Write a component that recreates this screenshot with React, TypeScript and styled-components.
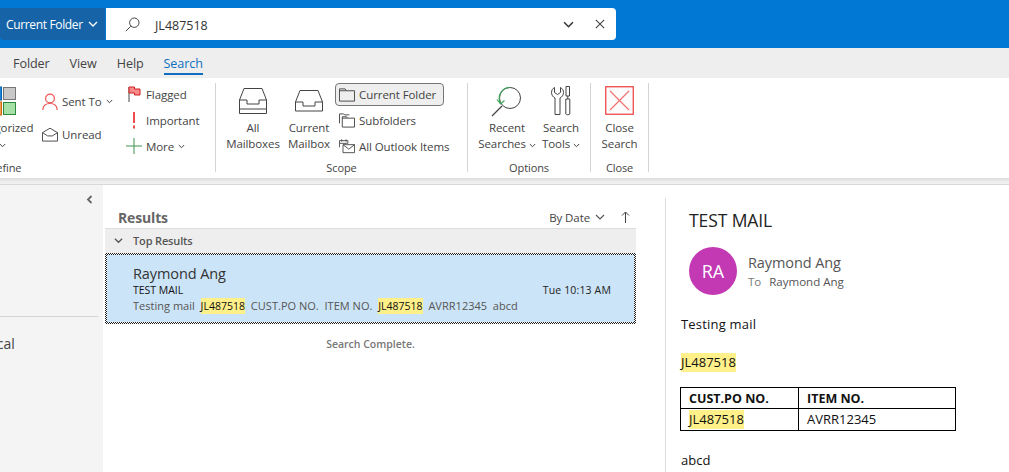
import React from "react";
import styled, { createGlobalStyle } from "styled-components";

const Global = createGlobalStyle`
  html, body { margin: 0; padding: 0; background: #fff; }
  body { font-family: "Open Sans", "Noto Sans", "Liberation Sans", sans-serif; font-size: 12px; color: #444; }
`;
const Page = styled.div`width: 1009px; height: 472px; overflow: hidden; display: flex; flex-direction: column;`;
const TopBar = styled.div`height: 48px; box-sizing: border-box; padding: 8px 0; background: #0078d4; display: flex; flex: none;`;
const ScopeButton = styled.div`width: 105px; background: #1664a7; border-radius: 0 0 0 4px; color: #fff; font-size: 12px; letter-spacing: -0.35px; display: flex; align-items: center; gap: 5px; padding-left: 6px; box-sizing: border-box; margin-right: 1px; white-space: nowrap;`;
const SearchBox = styled.div`width: 510px; background: #fff; border-radius: 0 4px 4px 0; display: flex; align-items: center; box-sizing: border-box; padding-left: 19px; color: #333; font-size: 12.5px;`;
const SearchText = styled.span`margin-left: 15px; flex: 1; padding-top: 2px;`;
const BoxAction = styled.span`display: flex; align-items: center; justify-content: center; width: 32px; height: 32px;`;
const Tabs = styled.div`height: 30px; background: #eee; display: flex; flex: none; gap: 20px; padding-left: 13px; box-sizing: border-box;`;
const Tab = styled.div<{ $on?: boolean }>`font-size: 12.6px; letter-spacing: -0.1px; height: 25px; line-height: 31px; color: ${p => (p.$on ? "#106ebe" : "#444")}; border-bottom: 2px solid ${p => (p.$on ? "#106ebe" : "transparent")};`;
const Ribbon = styled.div`height: 100px; box-sizing: border-box; background: #fff; display: flex; flex: none; padding: 5px 0 6px; overflow: hidden;`;
const Group = styled.div<{ $w: number; $shift?: number }>`width: ${p => p.$w}px; margin-left: ${p => p.$shift ?? 0}px; flex: none; box-sizing: border-box; border-right: 1px solid #d4d4d4; display: flex; flex-direction: column; align-items: stretch;`;
const GroupBody = styled.div<{ $end?: boolean; $pad?: number }>`height: 77px; flex: none; display: flex; justify-content: ${p => (p.$end ? "flex-end" : "flex-start")}; padding-left: ${p => p.$pad ?? 0}px;`;
const GroupLabel = styled.div`text-align: center; font-size: 11px; height: 12px; flex: none; line-height: 16px; letter-spacing: -0.1px; color: #444;`;
const Big = styled.div<{ $w: number }>`width: ${p => p.$w}px; flex: none; display: flex; flex-direction: column; align-items: center; text-align: center; font-size: 11.5px; line-height: 16px; letter-spacing: -0.1px; white-space: nowrap;`;
const BigIcon = styled.div`height: 37px; box-sizing: border-box; padding-bottom: 2px; display: flex; align-items: center; justify-content: center;`;
const Stack = styled.div<{ $w: number; $pitch: number; $pad?: number; $top?: number }>`width: ${p => p.$w}px; flex: none; display: flex; flex-direction: column; box-sizing: border-box; padding-left: ${p => p.$pad ?? 0}px; padding-top: ${p => p.$top ?? 0}px; & > * { height: ${p => p.$pitch}px; }`;
const Small = styled.div<{ $indent?: number }>`display: flex; align-items: center; gap: 4px; white-space: nowrap; font-size: 11.5px; letter-spacing: -0.08px; box-sizing: border-box; padding-left: ${p => p.$indent ?? 0}px;`;
const ActiveSmall = styled(Small)`&& { height: 23px; } width: 109px; margin-bottom: 1px; background: #eee; border: 1px solid #777; border-radius: 4px;`;
const FlagStack = styled(Stack)`margin-top: -2px;`;
const IconSlot = styled.span`width: 16px; display: flex; justify-content: center; flex: none;`;
const Shadow = styled.div`height: 7px; flex: none; background: linear-gradient(#dcdcdc, #f0f0f0 70%); border-bottom: 1px solid #d8d8d8; box-sizing: border-box;`;
const Main = styled.div`flex: 1; display: flex; min-height: 0;`;
const Nav = styled.div`width: 103px; flex: none; background: #f4f4f4; display: flex; flex-direction: column; box-sizing: border-box; overflow: hidden;`;
const Collapse = styled.div`height: 132px; flex: none; box-sizing: border-box; display: flex; justify-content: flex-end; padding: 10px 6px 0 0; border-bottom: 1px solid #d6d6d6; margin-right: 4px;`;
const NavItem = styled.div`font-size: 14px; color: #444; padding-top: 17px; margin-left: -19px; white-space: nowrap; line-height: 20px;`;
const List = styled.div`width: 563px; flex: none; box-sizing: border-box; border-right: 1px solid #ddd; margin: 13px 0 0; padding: 0 29px 0 2px; height: 274px;`;
const ListHead = styled.div`height: 30px; display: flex; align-items: center; padding: 8px 6px 0 13px; box-sizing: border-box;`;
const ResultsTitle = styled.div`font-size: 14px; font-weight: 700; color: #666; flex: 1; letter-spacing: -0.15px;`;
const Sort = styled.div`font-size: 11.5px; letter-spacing: -0.1px; color: #444; display: flex; align-items: center; gap: 5px;`;
const SortArrow = styled.span`margin-left: 11px; display: flex;`;
const SectionHead = styled.div`height: 25px; background: #eee; border-top: 1px solid #ddd; box-sizing: border-box; display: flex; align-items: center; gap: 10px; padding: 0 0 2px 9px; font-size: 11px; font-weight: 600; color: #555; letter-spacing: -0.15px;`;
const Selected = styled.div`height: 71px; box-sizing: border-box; padding: 2px; background: repeating-conic-gradient(#1c1c1c 0 25%, #fff 0 50%) 0 0 / 2px 2px;`;
const SelectedInner = styled.div`height: 100%; background: #cce4f7; box-sizing: border-box; padding: 9px 23px 0 26px; display: flex;`;
const SelectedText = styled.div`flex: 1; min-width: 0; white-space: nowrap;`;
const Sender = styled.div`font-size: 14.5px; line-height: 20px; color: #333; letter-spacing: -0.1px;`;
const Subject = styled.div`font-size: 10.5px; line-height: 15px; color: #111; letter-spacing: -0.02px; margin-top: -1px;`;
const Preview = styled.div`font-size: 11px; line-height: 15px; color: #555; letter-spacing: 0.02px; white-space: pre;`;
const Mark = styled.span`background: #fff08a; color: #111; font-size: 10.5px; padding: 1px 0;`;
const Time = styled.div`font-size: 10.5px; line-height: 15px; margin-top: 19px; color: #222; white-space: nowrap; letter-spacing: 0.15px;`;
const Status = styled.div`text-align: center; font-size: 10.5px; font-weight: 600; color: #777; margin-top: 13px; letter-spacing: 0; line-height: 15px;`;
const Reading = styled.div`flex: 1; padding: 13px 0 0 15px; box-sizing: border-box; color: #111;`;
const MailTitle = styled.div`font-size: 17.5px; line-height: 24px; color: #222; padding-left: 8px; letter-spacing: -0.1px; margin-top: 10px;`;
const Sender2 = styled.div`display: flex; align-items: center; gap: 11px; padding-left: 8px; margin-top: 15px;`;
const Avatar = styled.div`width: 48px; height: 48px; border-radius: 50%; background: #c239b3; color: #fff; font-size: 18px; display: flex; align-items: center; justify-content: center; flex: none;`;
const SenderText = styled.div`padding-top: 2px;`;
const SenderName = styled.div`font-size: 14.5px; line-height: 20px; color: #555; letter-spacing: -0.1px;`;
const ToLine = styled.div`font-size: 11.5px; line-height: 18px; color: #555; display: flex; gap: 8px; letter-spacing: 0;`;
const ToWord = styled.span`color: #777;`;
const BodyLine = styled.div<{ $top: number; $wide?: boolean }>`font-size: 13px; line-height: 19px; color: #111; margin-top: ${p => p.$top}px; letter-spacing: ${p => (p.$wide ? "0.2px" : "0")};`;
const Mail = styled.table`border-collapse: collapse; width: 276px; margin: 15px 0 0 -1px; font-size: 13px; color: #111;`;
const Th = styled.th<{ $w?: number }>`border: 1px solid #000; text-align: left; padding: 0 8px; height: 21px; line-height: 19px; font-size: 12.5px; font-weight: 700; letter-spacing: 0; ${p => p.$w && `width:${p.$w}px;`} box-sizing: border-box;`;
const Td = styled.td`border: 1px solid #000; padding: 0 8px; height: 22px; line-height: 19px; box-sizing: border-box;`;
const HiLite = styled.span`background: #fff08a; display: inline-block;`;

const Chev = ({ s = 10, c = "#555", w = 1.2 }: { s?: number; c?: string; w?: number }) => (
  <svg width={s} height={s} viewBox="0 0 10 10"><path d="M1 3 5 7 9 3" fill="none" stroke={c} strokeWidth={w} /></svg>
);
const TinyChev = () => (
  <svg width="7" height="5" viewBox="0 0 7 5"><path d="M.8 1 3.5 3.7 6.2 1" fill="none" stroke="#444" strokeWidth="1" /></svg>
);
const Tray = ({ all }: { all?: boolean }) => (
  <svg width="30" height={all ? 27 : 23} viewBox={all ? "0 0 30 27" : "0 0 30 23"} fill="none" stroke="#444" strokeWidth="1">
    <path d="M1.5 13 6 1.5H24L28.5 13" />
    <path d="M1.5 13H9V17H21V13H28.5V22H1.5Z" fill="#fff" />
    {all ? <path d="M1.5 22V26.5H28.5V22" /> : null}
  </svg>
);
const CatTiles = () => (
  <svg width="32" height="30" viewBox="-16 0 32 30">
    <rect x="-14" y="1" width="13.5" height="13" fill="#1c86d8" stroke="#0b62ad" />
    <rect x="1.5" y="1.5" width="12" height="12" fill="#c8c8c8" stroke="#777" />
    <rect x="-14" y="16" width="13.5" height="13" fill="#f0a050" stroke="#c96a10" />
    <rect x="1.5" y="16.5" width="12" height="12" fill="#a6e0a6" stroke="#2b8a3e" />
  </svg>
);
const Person = () => (
  <svg width="16" height="18" viewBox="0 0 16 18" fill="none" stroke="#f0524f" strokeWidth="1.2">
    <circle cx="8" cy="5.5" r="4.4" />
    <path d="M.8 17C1 12.5 4 10.5 8 10.5S15 12.5 15.2 17" />
  </svg>
);
const Envelope = () => (
  <svg width="17" height="15" viewBox="0 0 17 15" fill="none" stroke="#444" strokeWidth="1">
    <path d="M.5 5.5 8.5.8 16.5 5.5V14.5H.5Z" />
    <path d="M.5 5.5 6 9H11L16.5 5.5" />
  </svg>
);
const Flag = () => (
  <svg width="13" height="17" viewBox="0 0 13 17">
    <path d="M1 16V1" stroke="#444" fill="none" />
    <path d="M1 1H6.5V3H12V9H6.5V7H1Z" fill="#f78b8b" stroke="#d02020" />
  </svg>
);
const Bang = () => (
  <svg width="6" height="17" viewBox="0 0 6 17"><path d="M3 0V11M3 13.5V16.5" stroke="#ee4d4d" strokeWidth="2" /></svg>
);
const Plus = () => (
  <svg width="16" height="16" viewBox="0 0 16 16"><path d="M8 0V16M0 8H16" stroke="#3f9350" strokeWidth="1" /></svg>
);
const FolderOne = () => (
  <svg width="17" height="14" viewBox="0 0 17 14" fill="none" stroke="#444"><path d="M.5 13.5V.5H6.5L8 2.5H16.5V13.5ZM.5 2.5H8" /></svg>
);
const FolderTwo = () => (
  <svg width="17" height="15" viewBox="0 0 17 15" fill="none" stroke="#444"><path d="M.5 10.5V.5H5L6 1.5H11" /><path d="M3.5 14.5V3.5H8L9 5H16.5V14.5ZM3.5 5H9" fill="#fff" /></svg>
);
const OutlookItems = () => (
  <svg width="18" height="16" viewBox="0 0 18 16" fill="none" stroke="#444">
    <path d="M.5 9.5V2H10V5M.5 5H10M3 .5V3M8 .5V3" />
    <path d="M4.5 6.5H17.5V15.5H4.5ZM4.5 6.5 11 11.5 17.5 6.5" fill="#fff" />
  </svg>
);
const RecentIcon = () => (
  <svg width="32" height="32" viewBox="0 0 32 32" fill="none">
    <circle cx="19" cy="13" r="10.5" stroke="#444" />
    <path d="M19 2.5A10.5 10.5 0 0 0 9.5 18" stroke="#3fa45b" strokeWidth="1.2" />
    <path d="M6 14.5 9.5 19 13.5 15.5" stroke="#3fa45b" strokeWidth="1.2" />
    <path d="M11 21 1 31" stroke="#444" strokeWidth="1.2" />
  </svg>
);
const ToolsIcon = () => (
  <svg width="20" height="30" viewBox="0 0 20 30" fill="none" stroke="#444">
    <path d="M3.5 1.5C1.5 2.5 .5 4.5.5 6.5.5 9 2 11 4 12V28.5H9V12C11 11 12.5 9 12.5 6.5 12.5 4.5 11.5 2.5 9.5 1.5V6.5L6.5 8.5 3.5 6.5Z" />
    <path d="M15 .5H18.5V10H15ZM16.8 10V13M14.8 13H18.8V28C18.8 29 14.8 29 14.8 28Z" />
  </svg>
);
const CloseIcon = () => (
  <svg width="29" height="29" viewBox="0 0 29 29" fill="none">
    <rect x=".75" y=".75" width="27.5" height="27.5" fill="#fbfbfb" stroke="#ee3b3b" strokeWidth="1.2" />
    <path d="M5 5 24 24M24 5 5 24" stroke="#f47070" strokeWidth="1.1" />
  </svg>
);

export default function App() {
  return (
    <Page>
      <Global />
      <TopBar>
        <ScopeButton>
          Current Folder
          <Chev s={10} c="#fff" w={1.3} />
        </ScopeButton>
        <SearchBox>
          <svg width="15" height="15" viewBox="0 0 15 15" fill="none" stroke="#444">
            <circle cx="9.3" cy="5.7" r="4.7" /><path d="M5.8 9.2.8 14.2" />
          </svg>
          <SearchText>JL487518</SearchText>
          <BoxAction><Chev s={11} c="#333" w={1.4} /></BoxAction>
          <BoxAction>
            <svg width="10" height="10" viewBox="0 0 10 10"><path d="M.8.8 9.2 9.2M9.2.8.8 9.2" stroke="#444" strokeWidth="1.1" /></svg>
          </BoxAction>
        </SearchBox>
      </TopBar>
      <Tabs>
        <Tab>Folder</Tab><Tab>View</Tab><Tab>Help</Tab><Tab $on>Search</Tab>
      </Tabs>
      <Ribbon>
        <Group $w={420} $shift={-204}>
          <GroupBody $end>
            <Big $w={76}>
              <BigIcon><CatTiles /></BigIcon>
              <div>Categorized</div>
              <div><TinyChev /></div>
            </Big>
            <Stack $w={86} $pitch={33} $pad={2} $top={2}>
              <Small><IconSlot><Person /></IconSlot>Sent To <TinyChev /></Small>
              <Small><IconSlot><Envelope /></IconSlot>Unread</Small>
            </Stack>
            <FlagStack $w={89} $pitch={26}>
              <Small><IconSlot><Flag /></IconSlot>Flagged</Small>
              <Small><IconSlot><Bang /></IconSlot>Important</Small>
              <Small><IconSlot><Plus /></IconSlot>More <TinyChev /></Small>
            </FlagStack>
          </GroupBody>
          <GroupLabel>Refine</GroupLabel>
        </Group>
        <Group $w={252}>
          <GroupBody $pad={7}>
            <Big $w={60}><BigIcon><Tray all /></BigIcon><div>All</div><div>Mailboxes</div></Big>
            <Big $w={52}><BigIcon><Tray /></BigIcon><div>Current</div><div>Mailbox</div></Big>
            <Stack $w={120} $pitch={26}>
              <ActiveSmall $indent={3}><IconSlot><FolderOne /></IconSlot>Current Folder</ActiveSmall>
              <Small $indent={4}><IconSlot><FolderTwo /></IconSlot>Subfolders</Small>
              <Small $indent={4}><IconSlot><OutlookItems /></IconSlot>All Outlook Items</Small>
            </Stack>
          </GroupBody>
          <GroupLabel>Scope</GroupLabel>
        </Group>
        <Group $w={123}>
          <GroupBody $pad={12}>
            <Big $w={54}><BigIcon><RecentIcon /></BigIcon><div>Recent</div><div>Searches <TinyChev /></div></Big>
            <Big $w={54}><BigIcon><ToolsIcon /></BigIcon><div>Search</div><div>Tools <TinyChev /></div></Big>
          </GroupBody>
          <GroupLabel>Options</GroupLabel>
        </Group>
        <Group $w={58}>
          <GroupBody>
            <Big $w={57}><BigIcon><CloseIcon /></BigIcon><div>Close</div><div>Search</div></Big>
          </GroupBody>
          <GroupLabel>Close</GroupLabel>
        </Group>
      </Ribbon>
      <Shadow />
      <Main>
        <Nav>
          <Collapse>
            <svg width="7" height="9" viewBox="0 0 7 9"><path d="M5.5 1 2 4.5 5.5 8" fill="none" stroke="#666" strokeWidth="1.8" /></svg>
          </Collapse>
          <NavItem>Local</NavItem>
        </Nav>
        <List>
          <ListHead>
            <ResultsTitle>Results</ResultsTitle>
            <Sort>
              By Date <Chev s={10} c="#555" w={1.1} />
              <SortArrow>
                <svg width="9" height="12" viewBox="0 0 9 12"><path d="M4.5 12V1M1 4.5 4.5 1 8 4.5" fill="none" stroke="#444" /></svg>
              </SortArrow>
            </Sort>
          </ListHead>
          <SectionHead><Chev s={9} c="#555" w={1.4} />Top Results</SectionHead>
          <Selected>
            <SelectedInner>
              <SelectedText>
                <Sender>Raymond Ang</Sender>
                <Subject>TEST MAIL</Subject>
                <Preview>Testing mail  <Mark>JL487518</Mark>  CUST.PO NO.  ITEM NO.  <Mark>JL487518</Mark>  AVRR12345  abcd</Preview>
              </SelectedText>
              <Time>Tue 10:13 AM</Time>
            </SelectedInner>
          </Selected>
          <Status>Search Complete.</Status>
        </List>
        <Reading>
          <MailTitle>TEST MAIL</MailTitle>
          <Sender2>
            <Avatar>RA</Avatar>
            <SenderText>
              <SenderName>Raymond Ang</SenderName>
              <ToLine><ToWord>To</ToWord><span>Raymond Ang</span></ToLine>
            </SenderText>
          </Sender2>
          <BodyLine $top={20} $wide>Testing mail</BodyLine>
          <BodyLine $top={19}><HiLite>JL487518</HiLite></BodyLine>
          <Mail>
            <tbody>
              <tr><Th $w={118}>CUST.PO NO.</Th><Th>ITEM NO.</Th></tr>
              <tr><Td><HiLite>JL487518</HiLite></Td><Td>AVRR12345</Td></tr>
            </tbody>
          </Mail>
          <BodyLine $top={20}>abcd</BodyLine>
        </Reading>
      </Main>
    </Page>
  );
}
